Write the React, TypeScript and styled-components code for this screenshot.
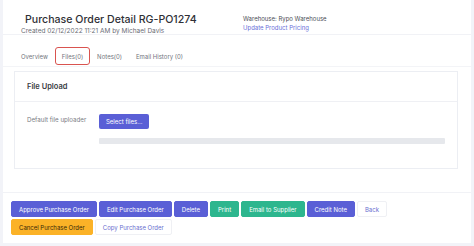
import React from 'react';
import styled, { createGlobalStyle } from 'styled-components';

const GlobalStyle = createGlobalStyle`
    html, body {
        margin: 0;
        padding: 0;
        background: #f2f3f8;
    }
    body {
        font-family: 'Inter', 'Noto Sans', sans-serif;
        -webkit-font-smoothing: antialiased;
    }
`;

const Page = styled.div`
    width: 474px;
    height: 246px;
    padding: 0 3px 3px 3px;
    box-sizing: border-box;
`;

const Card = styled.div`
    background: #ffffff;
    height: 243px;
    display: flex;
    flex-direction: column;
`;

const Header = styled.div`
    display: flex;
    height: 35px;
    box-sizing: border-box;
    border-bottom: 1px solid #f1f2f6;
    padding-left: 18px;
`;

const TitleBlock = styled.div`
    width: 222px;
    padding-top: 13px;
`;

const Title = styled.div`
    font-size: 10.6px;
    font-weight: 500;
    color: #2f3036;
    padding-left: 4px;
    line-height: 13px;
`;

const SubText = styled.div`
    font-size: 6.5px;
    color: #6b6d75;
    line-height: 10px;
`;

const InfoBlock = styled.div`
    padding-top: 14px;
`;

const InfoLine = styled.div<{ $link?: boolean }>`
    font-size: 6px;
    line-height: 9px;
    color: ${p => (p.$link ? '#6a6fd8' : '#4a4c55')};
`;

const Tabs = styled.div`
    display: flex;
    padding: 12px 0 0 11px;
    height: 32px;
    box-sizing: border-box;
    border-bottom: 1px solid #f3f4f7;
`;

const Tab = styled.div<{ $active?: boolean }>`
    height: 18px;
    padding: 0 6px;
    display: flex;
    align-items: center;
    font-size: 6px;
    color: #72747c;
    box-sizing: border-box;
    border-radius: 3px;
    border: 1px solid ${p => (p.$active ? '#d9534f' : 'transparent')};
`;

const Panel = styled.div`
    margin: 4px 13px 0 11px;
    border: 1px solid #eceef3;
    height: 98px;
    box-sizing: border-box;
`;

const PanelHeader = styled.div`
    height: 30px;
    box-sizing: border-box;
    border-bottom: 1px solid #eff0f4;
    padding-left: 12px;
    display: flex;
    align-items: center;
    font-size: 7.5px;
    font-weight: 600;
    color: #3b3d44;
`;

const PanelBody = styled.div`
    display: flex;
    padding: 12px 12px 0 12px;
`;

const FieldLabel = styled.div`
    width: 72px;
    font-size: 6.2px;
    color: #7a7c84;
    padding-top: 2px;
`;

const Field = styled.div`
    flex: 1;
    display: flex;
    flex-direction: column;
    align-items: flex-start;
    gap: 9px;
`;

const SelectButton = styled.div`
    height: 15px;
    padding: 0 7px;
    display: flex;
    align-items: center;
    background: #5a5fd6;
    color: #ffffff;
    font-size: 6px;
    border-radius: 2px;
`;

const Progress = styled.div`
    align-self: stretch;
    height: 6px;
    background: #e6e8ec;
    border-radius: 1px;
`;

const Footer = styled.div`
    margin-top: auto;
    border-top: 1px solid #f1f2f6;
    padding: 8px;
    display: flex;
    flex-wrap: wrap;
    gap: 2px;
`;

type Kind = 'blue' | 'green' | 'orange' | 'light';

const colors: Record<Kind, { bg: string; fg: string; border: string }> = {
    blue: { bg: '#5a5fd6', fg: '#ffffff', border: '#5a5fd6' },
    green: { bg: '#2db68e', fg: '#ffffff', border: '#2db68e' },
    orange: { bg: '#fbb227', fg: '#3a2b07', border: '#fbb227' },
    light: { bg: '#ffffff', fg: '#6a6fcf', border: '#eff0f4' },
};

const ActionButton = styled.div<{ $kind: Kind }>`
    height: 16px;
    padding: 0 7px;
    display: flex;
    align-items: center;
    box-sizing: border-box;
    font-size: 6px;
    border-radius: 2px;
    background: ${p => colors[p.$kind].bg};
    color: ${p => colors[p.$kind].fg};
    border: 1px solid ${p => colors[p.$kind].border};
`;

const actions: { label: string; kind: Kind }[] = [
    { label: 'Approve Purchase Order', kind: 'blue' },
    { label: 'Edit Purchase Order', kind: 'blue' },
    { label: 'Delete', kind: 'blue' },
    { label: 'Print', kind: 'green' },
    { label: 'Email to Supplier', kind: 'green' },
    { label: 'Credit Note', kind: 'blue' },
    { label: 'Back', kind: 'light' },
    { label: 'Cancel Purchase Order', kind: 'orange' },
    { label: 'Copy Purchase Order', kind: 'light' },
];

const App = () => (
    <>
        <GlobalStyle />
        <Page>
            <Card>
                <Header>
                    <TitleBlock>
                        <Title>Purchase Order Detail RG-PO1274</Title>
                        <SubText>Created 02/12/2022 11:21 AM by Michael Davis</SubText>
                    </TitleBlock>
                    <InfoBlock>
                        <InfoLine>Warehouse: Rypo Warehouse</InfoLine>
                        <InfoLine $link>Update Product Pricing</InfoLine>
                    </InfoBlock>
                </Header>
                <Tabs>
                    <Tab>Overview</Tab>
                    <Tab $active>Files(0)</Tab>
                    <Tab>Notes(0)</Tab>
                    <Tab>Email History (0)</Tab>
                </Tabs>
                <Panel>
                    <PanelHeader>File Upload</PanelHeader>
                    <PanelBody>
                        <FieldLabel>Default file uploader</FieldLabel>
                        <Field>
                            <SelectButton>Select files...</SelectButton>
                            <Progress />
                        </Field>
                    </PanelBody>
                </Panel>
                <Footer>
                    {actions.map(a => (
                        <ActionButton key={a.label} $kind={a.kind}>
                            {a.label}
                        </ActionButton>
                    ))}
                </Footer>
            </Card>
        </Page>
    </>
);

export default App;
